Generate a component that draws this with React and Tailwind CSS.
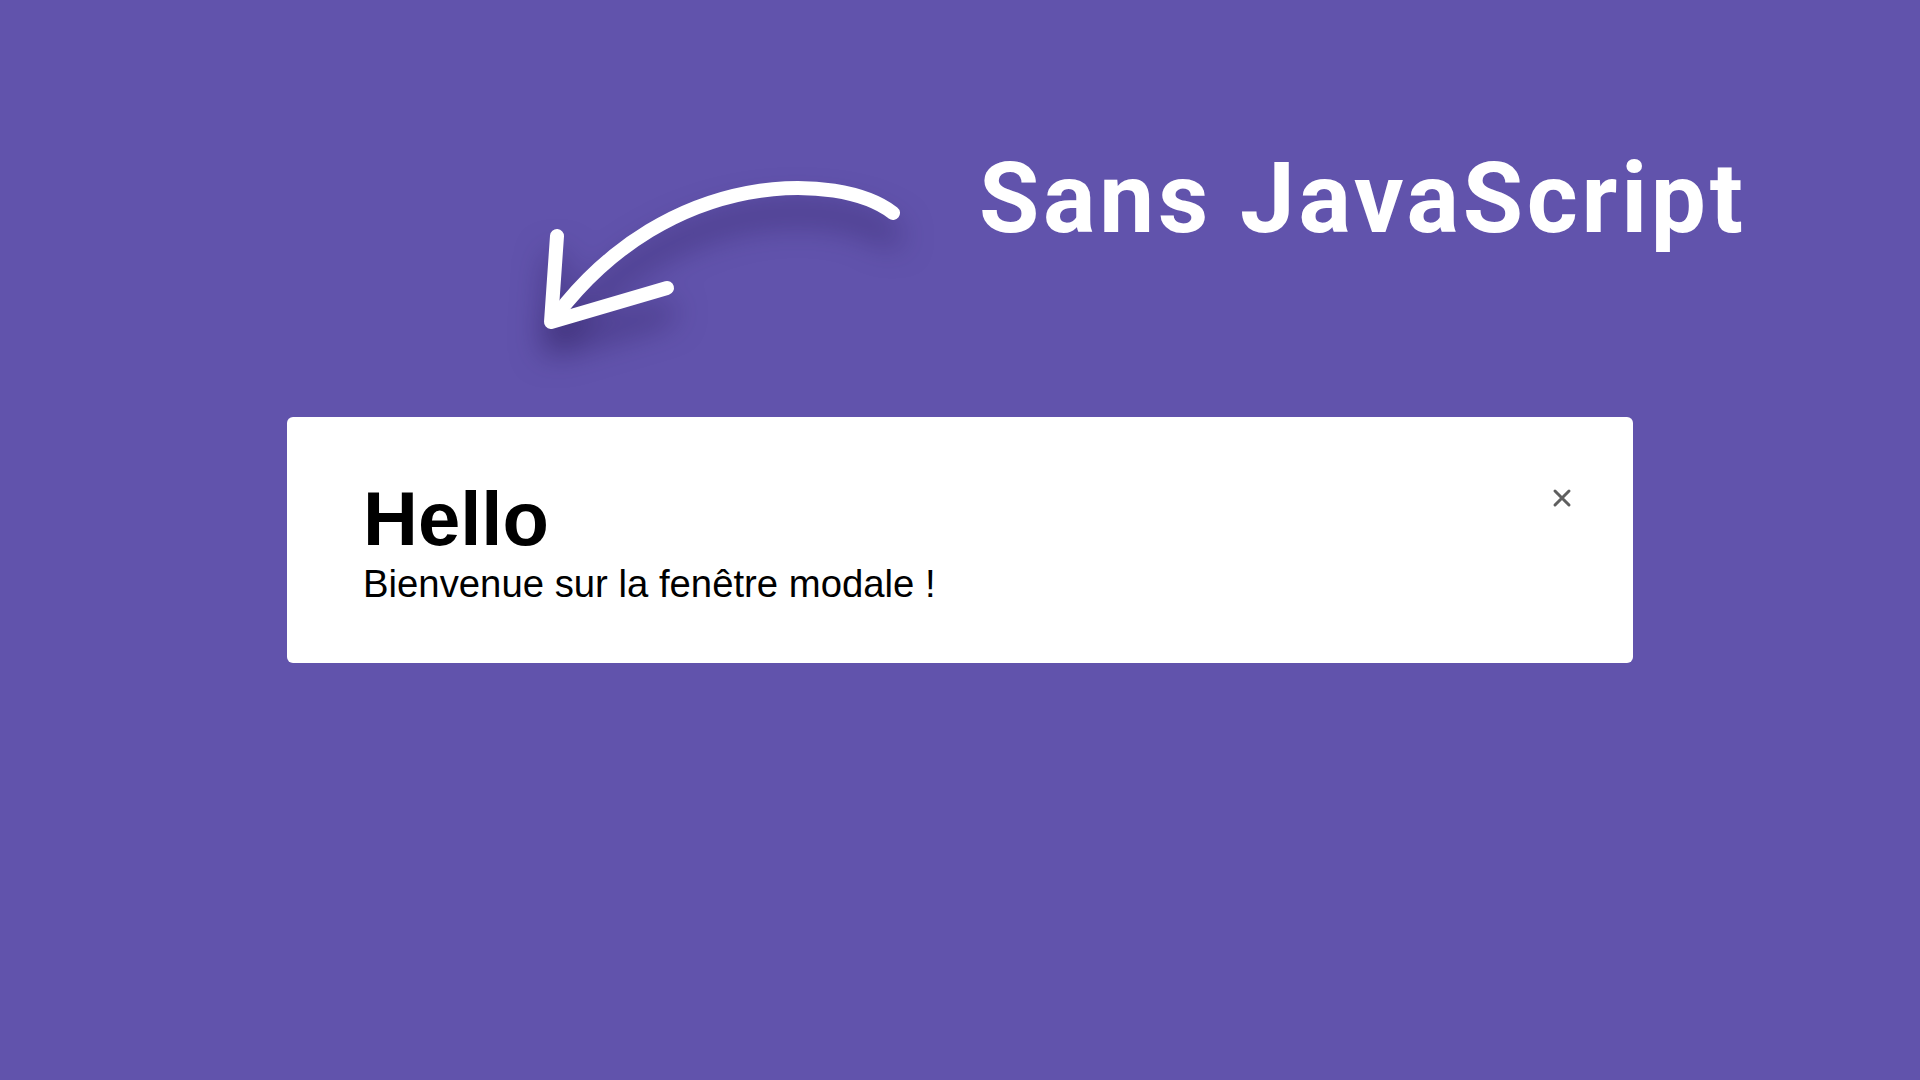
export default function App() {
  return (
    <div className="min-h-screen w-full bg-[#6153ac] pt-[150px]">
      <div className="flex h-[267px] items-start">
        <svg
          className="ml-[520px] h-[200px] w-[400px] shrink-0 drop-shadow-[0_24px_16px_rgba(35,20,80,0.6)]"
          viewBox="520 150 400 200"
          fill="none"
        >
          <path
            d="M893 213 C 840 172, 670 166, 556 316"
            stroke="#ffffff"
            strokeWidth="14"
            strokeLinecap="round"
          />
          <path
            d="M557 236 L 551 322 L 667 288"
            stroke="#ffffff"
            strokeWidth="14"
            strokeLinecap="round"
            strokeLinejoin="round"
          />
        </svg>
        <h1 className="ml-[59px] font-['Roboto',sans-serif] text-[98px] font-bold leading-none tracking-[0.038em] whitespace-nowrap text-white">
          Sans JavaScript
        </h1>
      </div>
      <div className="relative ml-[287px] h-[246px] w-[1346px] rounded-[6px] bg-white pl-[76px] pt-[64px] font-['Liberation_Sans',Arial,sans-serif] text-black">
        <h2 className="text-[76px] font-bold leading-none">Hello</h2>
        <p className="mt-[8px] text-[38.3px] leading-none">Bienvenue sur la fenêtre modale !</p>
        <svg className="absolute right-[61px] top-[71px] h-[20px] w-[20px]" viewBox="0 0 20 20">
          <path d="M3 3 L17 17 M17 3 L3 17" stroke="#5f5f5f" strokeWidth="3" strokeLinecap="round" />
        </svg>
      </div>
    </div>
  );
}
